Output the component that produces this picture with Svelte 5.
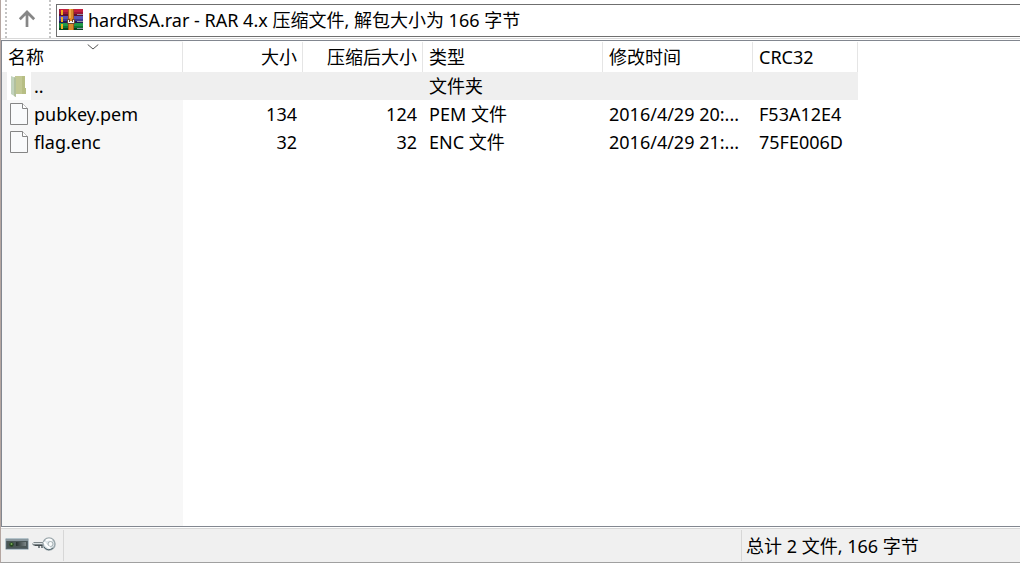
<script lang="ts">
	interface Entry {
		name: string;
		size?: string;
		packed?: string;
		type: string;
		modified?: string;
		crc?: string;
		folder?: boolean;
	}

	const entries: Entry[] = [
		{ name: '..', type: '文件夹', folder: true },
		{
			name: 'pubkey.pem',
			size: '134',
			packed: '124',
			type: 'PEM 文件',
			modified: '2016/4/29 20:...',
			crc: 'F53A12E4'
		},
		{
			name: 'flag.enc',
			size: '32',
			packed: '32',
			type: 'ENC 文件',
			modified: '2016/4/29 21:...',
			crc: '75FE006D'
		}
	];

	let address = $state('hardRSA.rar - RAR 4.x 压缩文件, 解包大小为 166 字节');

	// One bar per book of the archive icon
	const books = [
		{ y: 0, cover: '#c4203f', mid: '#9c1738', dark: '#5e1030' },
		{ y: 7, cover: '#5654b8', mid: '#3d3a94', dark: '#1f1c55' },
		{ y: 14, cover: '#1f9a48', mid: '#0f7434', dark: '#07431c' }
	];
</script>

<div class="window">
	<div class="toolbar">
		<span class="grip"></span>
		<button class="up" aria-label="上移">
			<svg width="18" height="18" viewBox="0 0 18 18">
				<path d="M9 17V2M1.8 9.2L9 2l7.2 7.2" fill="none" stroke="#868686" stroke-width="2.7" />
			</svg>
		</button>
		<span class="grip"></span>
		<div class="address">
			<svg width="24" height="21" viewBox="0 0 24 21">
				{#each books as book}
					<rect y={book.y} width="24" height="7" fill={book.dark} />
					<rect y={book.y} width="24" height="5" fill={book.mid} />
					<rect x="1" y={book.y} width="23" height="3" fill={book.cover} />
					<rect x="18" y={book.y + 5} width="6" height="1" fill="#8f90a4" />
					<rect x="2" y={book.y + 1} width="2" height="5" fill="#f2b01e" />
				{/each}
				<rect x="9" width="6" height="21" fill="#a8561c" />
				<rect x="10" width="4" height="21" fill="#d98a2c" />
				<rect x="10" width="2" height="9" fill="#f0ae48" />
				<rect x="8" y="10" width="8" height="5" fill="#6b4a35" />
				<path d="M9 14v-3h1v2h1v-1h2v1h1v-2h1v3z" fill="#f4f4f4" />
				<rect x="11" y="9" width="2" height="3" fill="#e68a22" />
			</svg>
			<input type="text" aria-label="地址" bind:value={address} />
		</div>
	</div>

	<div class="list">
		<table>
			<colgroup>
				<col class="col-name" />
				<col class="col-size" />
				<col class="col-size" />
				<col class="col-type" />
				<col class="col-modified" />
				<col class="col-crc" />
			</colgroup>
			<thead>
				<tr>
					<th class="sorted">
						名称
						<svg class="sort-mark" width="12" height="6" viewBox="0 0 12 6">
							<path d="M.7 .5L6 5l5.3-4.5" fill="none" stroke="#555" />
						</svg>
					</th>
					<th class="num">大小</th>
					<th class="num">压缩后大小</th>
					<th>类型</th>
					<th>修改时间</th>
					<th>CRC32</th>
				</tr>
			</thead>
			<tbody>
				{#each entries as entry}
					<tr class:selected={entry.folder}>
						<td class="name">
							<div class="name-cell">
								{#if entry.folder}
									<span class="icon folder">
										<svg width="18" height="22" viewBox="0 0 18 22">
											<path d="M5 1h10v12h1v6H5z" fill="#c2c894" />
											<path d="M12 1h3v12h1v6h-4z" fill="#b7be84" />
											<path d="M1 1l5 2v19l-5-3z" fill="#c2d3bd" />
											<path d="M4 2l2 1v19l-2-1z" fill="#b2c09c" />
										</svg>
									</span>
								{:else}
									<span class="icon">
										<svg width="18" height="22" viewBox="0 0 18 22">
											<path d="M.5 .5h12l5 5v16H.5z" fill="#f9fafb" stroke="#858585" />
											<path d="M12.500 .5v5h5" fill="#fff" stroke="#858585" />
										</svg>
									</span>
								{/if}
								{entry.name}
							</div>
						</td>
						<td class="num">{entry.size ?? ''}</td>
						<td class="num">{entry.packed ?? ''}</td>
						<td>{entry.type}</td>
						<td>{entry.modified ?? ''}</td>
						<td>{entry.crc ?? ''}</td>
					</tr>
				{/each}
			</tbody>
		</table>
	</div>

	<div class="status">
		<div class="status-icons">
			<svg width="24" height="12" viewBox="0 0 24 12">
				<defs>
					<linearGradient id="slot">
						<stop offset="0" stop-color="#25302e" />
						<stop offset="1" stop-color="#7d8789" />
					</linearGradient>
				</defs>
				<rect x=".5" y=".5" width="23" height="11" rx="1" fill="#56636a" stroke="#b4c3ca" />
				<rect x="1" y="1" width="22" height="2" fill="#89979e" />
				<rect x="2" y="3" width="20" height="7" fill="#4a5656" />
				<rect x="11" y="4" width="10" height="4" fill="url(#slot)" />
				<circle cx="6.500" cy="6.500" r="2.200" fill="#26481f" />
				<circle cx="6.500" cy="6" r="1" fill="#79ad5b" />
			</svg>
			<svg width="24" height="14" viewBox="0 0 24 14">
				<path d="M0 7l2-2h11v4h-2v2H9V9H8v2H6V9H2z" fill="#7e8689" />
				<path d="M1 6.500h12" stroke="#dde3e5" />
				<path d="M3 8.500h10" stroke="#444c50" />
				<circle cx="17" cy="7" r="6" fill="#dfe7ea" stroke="#9ba7ac" stroke-width="1.500" />
				<circle cx="18.500" cy="7" r="2.500" fill="#f8fafa" stroke="#a5afb3" />
				<path d="M12 5q2 4 6 6M14 3.500q3-2 6 0" fill="none" stroke="#fff" stroke-width="2" />
				<path d="M12 10q4 5 9 1" fill="none" stroke="#53656d" />
			</svg>
		</div>
		<div class="totals">总计 2 文件, 166 字节</div>
	</div>
</div>

<style>
	:global(body) {
		margin: 0;
	}

	.window {
		box-sizing: border-box;
		min-height: 100vh;
		display: flex;
		flex-direction: column;
		border-left: 1px solid #b5a6a1;
		border-bottom: 1px solid #a0a0a0;
		background: #fff;
		color: #000;
		font-family: 'Noto Sans', 'Noto Sans CJK SC', sans-serif;
		font-size: 18px;
		line-height: 28px;
	}

	.toolbar {
		height: 38px;
		display: flex;
		align-items: stretch;
		padding-left: 4px;
		border-bottom: 1px solid #d9d9d9;
	}

	.grip {
		width: 2px;
		background: repeating-linear-gradient(#c4c4c4 0 2px, #fff 2px 4px);
	}

	.up {
		width: 42px;
		display: flex;
		align-items: center;
		justify-content: center;
		padding: 0 2px 0 0;
		border: 0;
		background: none;
	}

	.address {
		flex: 1;
		display: flex;
		align-items: center;
		gap: 5px;
		box-sizing: border-box;
		height: 33px;
		margin: 4px 0 0 5px;
		padding: 0 0 2px 2px;
		border: 1px solid #6f6f6f;
		border-right: 0;
	}

	.address input {
		flex: 1;
		min-width: 0;
		height: 28px;
		padding: 0;
		border: 0;
		outline: 0;
		background: none;
		color: inherit;
		font: inherit;
	}

	/* The sorted column stays tinted below the last row */
	.list {
		flex: 1;
		padding-top: 1px;
		border: 1px solid #828790;
		border-right: 0;
		margin-top: 1px;
		background: linear-gradient(#f7f7f7, #f7f7f7) no-repeat 0 0 / 181px 100%;
	}

	table {
		width: 856px;
		table-layout: fixed;
		border-collapse: separate;
		border-spacing: 0;
		background: #fff;
	}

	.col-name {
		width: 181px;
	}

	.col-size {
		width: 120px;
	}

	.col-type {
		width: 180px;
	}

	.col-modified {
		width: 150px;
	}

	.col-crc {
		width: 105px;
	}

	th,
	td {
		box-sizing: border-box;
		height: 28px;
		padding: 0 6px;
		text-align: left;
		font-weight: 400;
		white-space: nowrap;
	}

	th {
		height: 30px;
		border-right: 1px solid #e5e5e5;
		padding-right: 5px;
	}

	.num {
		text-align: right;
	}

	.sorted {
		position: relative;
	}

	.sort-mark {
		position: absolute;
		top: 2px;
		left: 50%;
		margin-left: -5px;
	}

	.name {
		padding-left: 5px;
		background: #f7f7f7;
	}

	.selected td {
		background: #efefef;
	}

	.name-cell {
		display: flex;
		align-items: center;
		gap: 3px;
	}

	.icon {
		width: 24px;
		height: 28px;
		display: flex;
		align-items: center;
		justify-content: center;
	}

	.folder {
		background: #fff;
	}

	.status {
		display: flex;
		justify-content: space-between;
		height: 33px;
		margin-top: 1px;
		border-top: 1px solid #d7d7d7;
		background: #f0f0f0;
	}

	.status-icons,
	.totals {
		box-sizing: border-box;
		height: 31px;
		margin-top: 1px;
		display: flex;
		align-items: center;
	}

	.status-icons {
		width: 63px;
		gap: 3px;
		padding: 0 0 4px 4px;
		border-right: 1px solid #d7d7d7;
	}

	.totals {
		width: 279px;
		padding-left: 4px;
		border-left: 1px solid #d7d7d7;
	}
</style>
